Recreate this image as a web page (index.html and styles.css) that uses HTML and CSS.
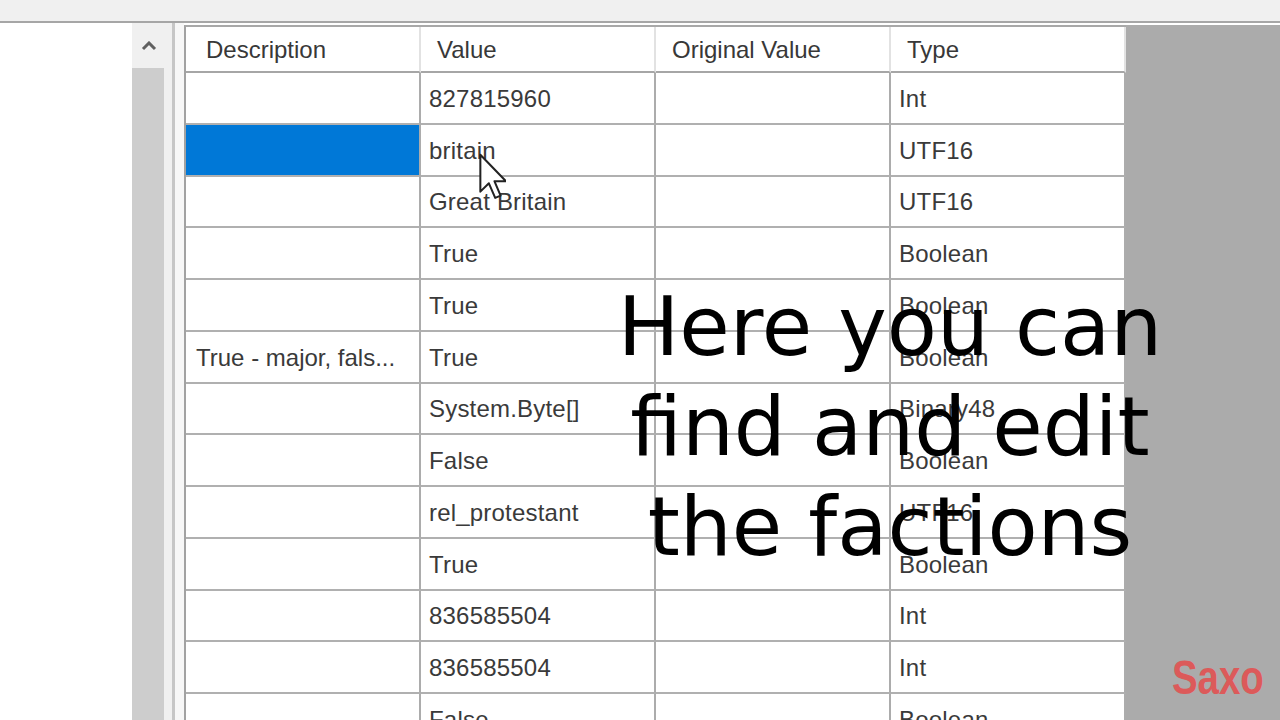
FILE: index.html
```html
<!DOCTYPE html>
<html>
<head>
<meta charset="utf-8">
<link rel="stylesheet" href="styles.css">
</head>
<body>
<div class="top"></div>
<div class="main">
  <div class="tree"></div>
  <div class="vscroll">
    <div class="vscroll-btn">
      <svg width="16" height="10" viewBox="0 0 16 10"><polyline points="2,8 8,2 14,8" fill="none" stroke="#606060" stroke-width="3"/></svg>
    </div>
    <div class="vscroll-thumb"></div>
  </div>
  <div class="splitter"></div>
  <div class="grid">
    <div class="hcell hcell-first">Description</div>
    <div class="hcell">Value</div>
    <div class="hcell">Original Value</div>
    <div class="hcell">Type</div>

    <div class="cell cell-first"></div><div class="cell">827815960</div><div class="cell"></div><div class="cell">Int</div>
    <div class="cell cell-first selected"></div><div class="cell">britain</div><div class="cell"></div><div class="cell">UTF16</div>
    <div class="cell cell-first"></div><div class="cell">Great Britain</div><div class="cell"></div><div class="cell">UTF16</div>
    <div class="cell cell-first"></div><div class="cell">True</div><div class="cell"></div><div class="cell">Boolean</div>
    <div class="cell cell-first"></div><div class="cell">True</div><div class="cell"></div><div class="cell">Boolean</div>
    <div class="cell cell-first">True - major, fals...</div><div class="cell">True</div><div class="cell"></div><div class="cell">Boolean</div>
    <div class="cell cell-first"></div><div class="cell">System.Byte[]</div><div class="cell"></div><div class="cell">Binary48</div>
    <div class="cell cell-first"></div><div class="cell">False</div><div class="cell"></div><div class="cell">Boolean</div>
    <div class="cell cell-first"></div><div class="cell">rel_protestant</div><div class="cell"></div><div class="cell">UTF16</div>
    <div class="cell cell-first"></div><div class="cell">True</div><div class="cell"></div><div class="cell">Boolean</div>
    <div class="cell cell-first"></div><div class="cell">836585504</div><div class="cell"></div><div class="cell">Int</div>
    <div class="cell cell-first"></div><div class="cell">836585504</div><div class="cell"></div><div class="cell">Int</div>
    <div class="cell cell-first"></div><div class="cell">False</div><div class="cell"></div><div class="cell">Boolean</div>
  </div>
  <div class="side"></div>
</div>

<svg class="cursor" width="27" height="48" viewBox="0 0 12 21"><polygon points="0.6,0.6 0.6,17 4.4,13.3 7.2,19.8 9.6,18.8 6.9,12.4 12,12.4" fill="#ffffff" stroke="#222" stroke-width="0.9" stroke-linejoin="round"/></svg>

<div class="caption">Here you can<br>find and edit<br>the factions</div>
<div class="watermark">Saxo</div>
</body>
</html>
```

FILE: styles.css
```css
html, body {
  margin: 0;
  padding: 0;
  width: 1280px;
  height: 720px;
  overflow: hidden;
  background: #ffffff;
  font-family: "Liberation Sans", Arial, sans-serif;
}

.top {
  height: 21px;
  background: #f0f0f0;
  border-bottom: 2px solid #a6a6a6;
}

.main {
  display: flex;
  height: 697px;
  overflow: hidden;
}

.tree {
  width: 132px;
  flex: none;
  background: #ffffff;
}

.vscroll {
  width: 40px;
  flex: none;
  background: #f0f0f0;
  display: flex;
  flex-direction: column;
}

.vscroll-btn {
  height: 45px;
  width: 33px;
  display: flex;
  align-items: center;
  justify-content: center;
  flex: none;
}

.vscroll-thumb {
  width: 32px;
  flex: 1;
  background: #cdcdcd;
}

.splitter {
  width: 9px;
  flex: none;
  border-left: 3px solid #c6c6c6;
  background: #f7f7f7;
}

.grid {
  flex: none;
  margin-top: 2px;
  display: grid;
  grid-template-columns: repeat(4, 235px);
  grid-template-rows: 46px;
  grid-auto-rows: 51.75px;
  border-left: 2px solid #a2a2a2;
  border-top: 2px solid #a8a8a8;
  align-content: start;
  background: #ffffff;
  color: #3a3a3a;
  font-size: 24px;
}

.hcell {
  box-sizing: border-box;
  display: flex;
  align-items: center;
  padding-left: 16px;
  padding-top: 2px;
  border-right: 2px solid #e2e2e2;
  border-bottom: 2px solid #a6a6a6;
  color: #383838;
  white-space: nowrap;
}

.hcell-first {
  padding-left: 20px;
}

.cell {
  box-sizing: border-box;
  display: flex;
  align-items: center;
  padding-left: 8px;
  padding-top: 2px;
  border-right: 2px solid #acacac;
  border-bottom: 2px solid #b0b0b0;
  white-space: nowrap;
  overflow: hidden;
  letter-spacing: 0.2px;
}

.cell-first {
  padding-left: 10px;
  letter-spacing: 0;
}

.selected {
  background: #0078d7;
}

.side {
  flex: 1;
  margin-top: 2px;
  background: #ababab;
}

.cursor {
  position: absolute;
  left: 479px;
  top: 153px;
}

.caption {
  position: absolute;
  left: 590px;
  top: 277px;
  width: 600px;
  text-align: center;
  font-family: "DejaVu Sans", sans-serif;
  font-size: 82px;
  line-height: 100px;
  color: #000000;
  white-space: nowrap;
}

.watermark {
  position: absolute;
  right: 16px;
  top: 650px;
  font-family: "Liberation Sans Narrow", "Liberation Sans", sans-serif;
  font-weight: bold;
  font-size: 48px;
  line-height: 56px;
  color: #dc5a5a;
  transform: scaleX(0.8);
  transform-origin: right center;
}
```
